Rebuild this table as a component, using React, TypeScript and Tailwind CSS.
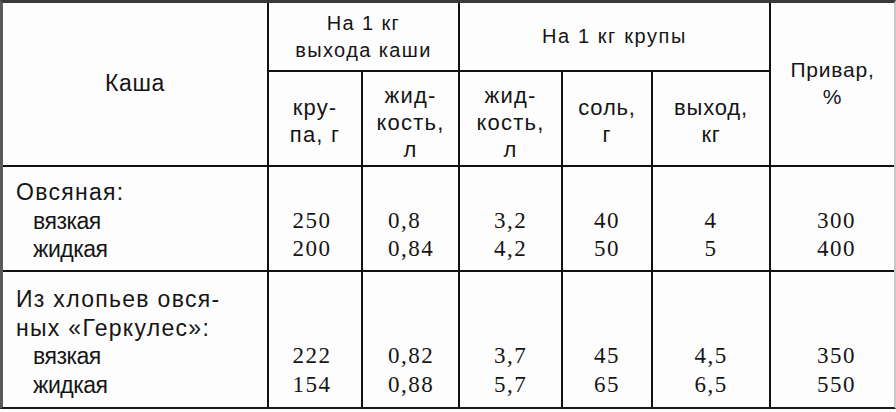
function Head({ lines, className = "" }: { lines: string[]; className?: string }) {
  return (
    <div className={`bg-[#fdfdfd] flex flex-col items-center justify-center text-center font-['Liberation_Sans',sans-serif] leading-[27px] text-[#151515] ${className}`}>
      {lines.map((l, i) => (
        <div key={i}>{l}</div>
      ))}
    </div>
  );
}

function Nums({ values, blank, pad, className = "" }: { values: string[]; blank: number; pad: string; className?: string }) {
  return (
    <div className={`bg-[#fdfdfd] flex flex-col font-['Liberation_Serif',serif] text-[23px] leading-[28.5px] tracking-[1.5px] text-[#151515] ${pad} ${className}`}>
      {Array.from({ length: blank }).map((_, i) => (
        <div key={"b" + i}>&nbsp;</div>
      ))}
      {values.map((v, i) => (
        <div key={i}>{v}</div>
      ))}
    </div>
  );
}

export default function App() {
  const rows = [
    {
      names: [
        { t: "Овсяная:", indent: false },
        { t: "вязкая", indent: true },
        { t: "жидкая", indent: true },
      ],
      pad: "pt-[11px]",
      blank: 1,
      cols: [
        ["250", "200"],
        ["0,8", "0,84"],
        ["3,2", "4,2"],
        ["40", "50"],
        ["4", "5"],
        ["300", "400"],
      ],
    },
    {
      names: [
        { t: "Из хлопьев овся-", indent: false },
        { t: "ных «Геркулес»:", indent: false },
        { t: "вязкая", indent: true },
        { t: "жидкая", indent: true },
      ],
      pad: "pt-[13px]",
      blank: 2,
      cols: [
        ["222", "154"],
        ["0,82", "0,88"],
        ["3,7", "5,7"],
        ["45", "65"],
        ["4,5", "6,5"],
        ["350", "550"],
      ],
    },
  ];

  return (
    <div className="w-[896px] h-[412px] bg-[#fdfdfd] overflow-hidden">
      <div className="grid grid-cols-[264px_92px_95px_101px_88px_116px_123px] grid-rows-[67px_93px_103px_135px] gap-[2px] bg-[#111] border-l-[3px] border-l-[#5a5a5a] border-t-[3px] border-t-[#3a3a3a] border-b-2 border-b-[#1a1a1a] border-r-2 border-r-[#c8c8c8]">
        <Head lines={["Каша"]} className="row-span-2 text-[23px] tracking-[0.6px] pb-[2px]" />
        <Head lines={["На 1 кг", "выхода каши"]} className="col-span-2 text-[20px] tracking-[1.4px]" />
        <Head lines={["На 1 кг крупы"]} className="col-span-3 text-[20px] tracking-[1.6px]" />
        <Head lines={["Привар,", "%"]} className="row-span-2 text-[21px] tracking-[0.8px] pb-[2px]" />
        <Head lines={["кру-", "па, г"]} className="text-[22px] tracking-[1.2px] pt-[4px]" />
        <Head lines={["жид-", "кость,", "л"]} className="text-[22px] tracking-[1.2px] pt-[8px]" />
        <Head lines={["жид-", "кость,", "л"]} className="text-[22px] tracking-[1.2px] pt-[8px]" />
        <Head lines={["соль,", "г"]} className="text-[22px] tracking-[0.8px] pt-[4px]" />
        <Head lines={["выход,", "кг"]} className="text-[22px] tracking-[0.8px] pt-[4px]" />

        {rows.map((r, ri) => (
          <div key={ri} className="contents">
            <div className={`bg-[#fdfdfd] flex flex-col font-['Liberation_Sans',sans-serif] text-[23px] leading-[28.5px] text-[#151515] pl-[13px] ${r.pad}`}>
              {r.names.map((n, i) => (
                <div key={i} className={n.indent ? "pl-[17px] tracking-[-0.5px]" : "tracking-[1.3px]"}>
                  {n.t}
                </div>
              ))}
            </div>
            <Nums values={r.cols[0]} blank={r.blank} pad={r.pad} className="items-center pr-[6px]" />
            <Nums values={r.cols[1]} blank={r.blank} pad={r.pad} className="items-start pl-[25px]" />
            <Nums values={r.cols[2]} blank={r.blank} pad={r.pad} className="items-center" />
            <Nums values={r.cols[3]} blank={r.blank} pad={r.pad} className="items-center" />
            <Nums values={r.cols[4]} blank={r.blank} pad={r.pad} className="items-center" />
            <Nums values={r.cols[5]} blank={r.blank} pad={r.pad} className="items-center pl-[8px]" />
          </div>
        ))}
      </div>
    </div>
  );
}
